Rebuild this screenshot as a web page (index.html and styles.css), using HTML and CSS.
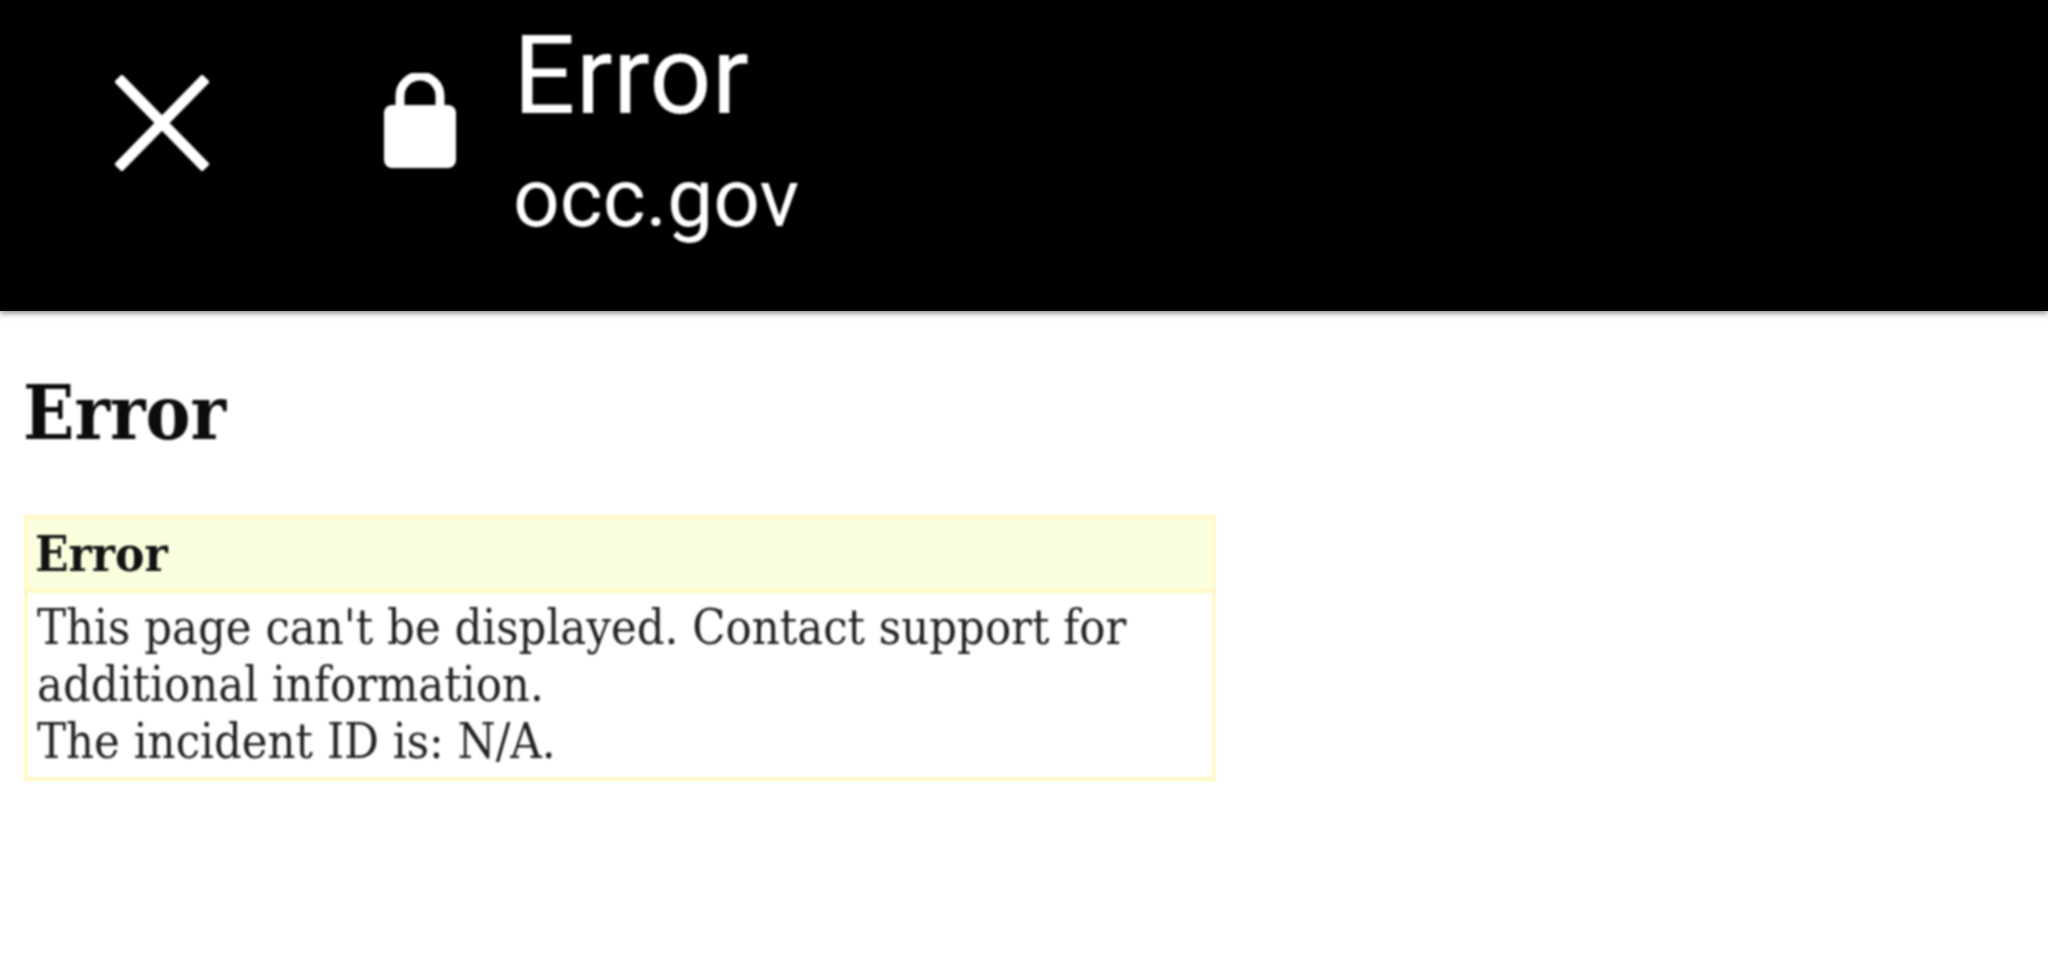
FILE: index.html
```html
<!DOCTYPE html>
<html lang="en">
<head>
<meta charset="utf-8">
<title>Error</title>
<link rel="stylesheet" href="styles.css">
</head>
<body>
<header class="toolbar">
  <svg class="icon-close soft" viewBox="0 0 94 96" aria-hidden="true"><path d="M3 3 L91 93 M91 3 L3 93"/></svg>
  <svg class="icon-lock soft" viewBox="0 0 72 95" aria-hidden="true">
    <path class="shackle" d="M16 36 V23 A20 20 0 0 1 56 23 V36"/>
    <rect class="body" x="0" y="32" width="72" height="63" rx="8"/>
  </svg>
  <div class="titles soft">
    <div class="title">Error</div>
    <div class="url">occ.gov</div>
  </div>
</header>
<main class="content soft">
  <h1>Error</h1>
  <section class="box">
    <h2>Error</h2>
    <div class="message">This page can't be displayed. Contact support for additional information.<br>The incident ID is: N/A.</div>
  </section>
</main>
</body>
</html>
```
FILE: styles.css
```css
* { box-sizing: border-box; }
html, body { margin: 0; padding: 0; background: #fff; height: 100%; overflow: hidden; }
.soft { filter: blur(1px); }
.toolbar {
  display: flex;
  align-items: flex-start;
  height: 311px;
  background: #000;
  color: #fff;
  font-family: Roboto, sans-serif;
  box-shadow: 0 2px 6px rgba(0,0,0,.5);
  position: relative;
}
.icon-close { width: 94px; height: 96px; margin: 75px 0 0 115px; flex: none; }
.icon-close path { stroke: #fff; stroke-width: 11; fill: none; }
.icon-lock { width: 72px; height: 95px; margin: 73px 0 0 175px; flex: none; }
.icon-lock .shackle { stroke: #fff; stroke-width: 9; fill: none; }
.icon-lock .body { fill: #fff; }
.titles { margin: 14px 0 0 57px; }
.title { font-size: 110px; line-height: 124px; }
.url { font-size: 82px; line-height: 100px; margin-top: 10px; }
.content { padding: 0 24px; font-family: "DejaVu Serif Condensed", "DejaVu Serif", serif; color: #222; }
h1 { font-size: 75px; line-height: 84px; font-weight: 700; margin: 0 0 0 -1px; padding-top: 60px; color: #0c0c0c; height: 204px; }
.box { width: 1192px; height: 266px; border: 4px solid #fff8c4; }
h2 { margin: 0; height: 70px; background: #fcffde; font-size: 49px; line-height: 70px; padding-left: 7px; font-weight: 700; color: #111; }
.message { border-top: 4px solid #fff8c4; padding: 6px 8px 0 9px; font-size: 48.4px; line-height: 57px; color: #222; }
```
